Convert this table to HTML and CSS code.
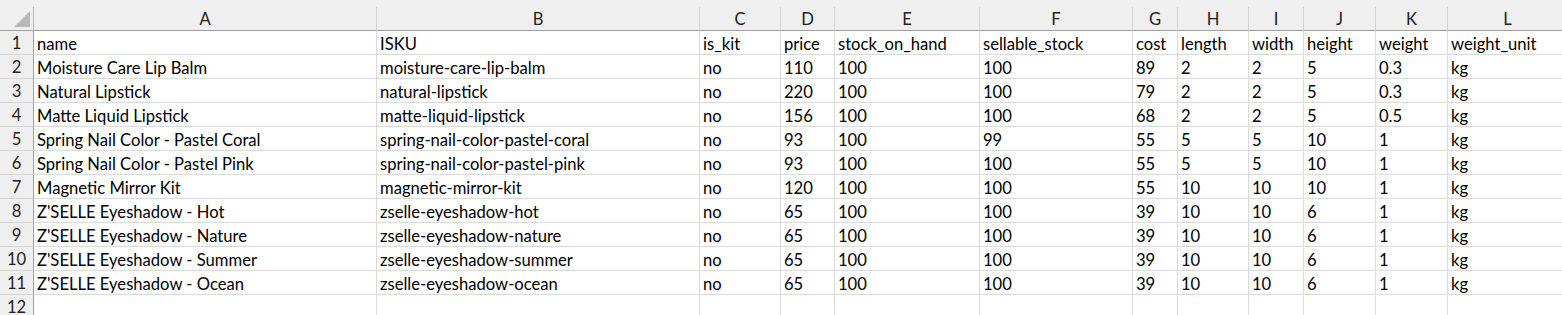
FILE: index.html
```html
<!DOCTYPE html>
<html>
<head>
<meta charset="utf-8">
<link rel="stylesheet" href="styles.css">
</head>
<body>
<div class="sheet">
  <div class="topstrip"></div>
  <div class="grid">
    <div class="corner"><span class="tri"></span></div>
    <div class="ch">A</div><div class="ch">B</div><div class="ch">C</div><div class="ch">D</div><div class="ch">E</div><div class="ch">F</div><div class="ch">G</div><div class="ch">H</div><div class="ch">I</div><div class="ch">J</div><div class="ch">K</div><div class="ch">L</div>

    <div class="rh">1</div><div class="c">name</div><div class="c">ISKU</div><div class="c">is_kit</div><div class="c">price</div><div class="c">stock_on_hand</div><div class="c">sellable_stock</div><div class="c">cost</div><div class="c">length</div><div class="c">width</div><div class="c">height</div><div class="c">weight</div><div class="c">weight_unit</div>

    <div class="rh">2</div><div class="c">Moisture Care Lip Balm</div><div class="c">moisture-care-lip-balm</div><div class="c">no</div><div class="c">110</div><div class="c">100</div><div class="c">100</div><div class="c">89</div><div class="c">2</div><div class="c">2</div><div class="c">5</div><div class="c">0.3</div><div class="c">kg</div>

    <div class="rh">3</div><div class="c">Natural Lipstick</div><div class="c">natural-lipstick</div><div class="c">no</div><div class="c">220</div><div class="c">100</div><div class="c">100</div><div class="c">79</div><div class="c">2</div><div class="c">2</div><div class="c">5</div><div class="c">0.3</div><div class="c">kg</div>

    <div class="rh">4</div><div class="c">Matte Liquid Lipstick</div><div class="c">matte-liquid-lipstick</div><div class="c">no</div><div class="c">156</div><div class="c">100</div><div class="c">100</div><div class="c">68</div><div class="c">2</div><div class="c">2</div><div class="c">5</div><div class="c">0.5</div><div class="c">kg</div>

    <div class="rh">5</div><div class="c">Spring Nail Color - Pastel Coral</div><div class="c">spring-nail-color-pastel-coral</div><div class="c">no</div><div class="c">93</div><div class="c">100</div><div class="c">99</div><div class="c">55</div><div class="c">5</div><div class="c">5</div><div class="c">10</div><div class="c">1</div><div class="c">kg</div>

    <div class="rh">6</div><div class="c">Spring Nail Color - Pastel Pink</div><div class="c">spring-nail-color-pastel-pink</div><div class="c">no</div><div class="c">93</div><div class="c">100</div><div class="c">100</div><div class="c">55</div><div class="c">5</div><div class="c">5</div><div class="c">10</div><div class="c">1</div><div class="c">kg</div>

    <div class="rh">7</div><div class="c">Magnetic Mirror Kit</div><div class="c">magnetic-mirror-kit</div><div class="c">no</div><div class="c">120</div><div class="c">100</div><div class="c">100</div><div class="c">55</div><div class="c">10</div><div class="c">10</div><div class="c">10</div><div class="c">1</div><div class="c">kg</div>

    <div class="rh">8</div><div class="c">Z'SELLE Eyeshadow - Hot</div><div class="c">zselle-eyeshadow-hot</div><div class="c">no</div><div class="c">65</div><div class="c">100</div><div class="c">100</div><div class="c">39</div><div class="c">10</div><div class="c">10</div><div class="c">6</div><div class="c">1</div><div class="c">kg</div>

    <div class="rh">9</div><div class="c">Z'SELLE Eyeshadow - Nature</div><div class="c">zselle-eyeshadow-nature</div><div class="c">no</div><div class="c">65</div><div class="c">100</div><div class="c">100</div><div class="c">39</div><div class="c">10</div><div class="c">10</div><div class="c">6</div><div class="c">1</div><div class="c">kg</div>

    <div class="rh">10</div><div class="c">Z'SELLE Eyeshadow - Summer</div><div class="c">zselle-eyeshadow-summer</div><div class="c">no</div><div class="c">65</div><div class="c">100</div><div class="c">100</div><div class="c">39</div><div class="c">10</div><div class="c">10</div><div class="c">6</div><div class="c">1</div><div class="c">kg</div>

    <div class="rh">11</div><div class="c">Z'SELLE Eyeshadow - Ocean</div><div class="c">zselle-eyeshadow-ocean</div><div class="c">no</div><div class="c">65</div><div class="c">100</div><div class="c">100</div><div class="c">39</div><div class="c">10</div><div class="c">10</div><div class="c">6</div><div class="c">1</div><div class="c">kg</div>

    <div class="rh">12</div><div class="c"></div><div class="c"></div><div class="c"></div><div class="c"></div><div class="c"></div><div class="c"></div><div class="c"></div><div class="c"></div><div class="c"></div><div class="c"></div><div class="c"></div><div class="c"></div>
  </div>
</div>
</body>
</html>
```

FILE: styles.css
```css
* { box-sizing: border-box; }
html, body { margin: 0; padding: 0; background: #ffffff; }
body { width: 1562px; height: 315px; overflow: hidden; }

.sheet {
  font-family: Lato, "Open Sans", "Noto Sans", sans-serif;
  font-size: 16.6px;
  color: #000;
}

.topstrip {
  height: 7px;
  background: #f0f0f0;
}

.grid {
  display: grid;
  grid-template-columns: 34px 343px 323px 81px 54px 145px 153px 45px 71px 55px 72px 72px 120px;
  grid-auto-rows: 24px;
  grid-template-rows: 24px;
}

.corner, .ch {
  background: #efefef;
  border-right: 1px solid #d4d4d4;
  border-bottom: 1px solid #a0a0a0;
}

.corner {
  position: relative;
  border-right: 1px solid #b8b8b8;
}
.tri {
  position: absolute;
  right: 3px;
  bottom: 3px;
  width: 0;
  height: 0;
  border-left: 16px solid transparent;
  border-bottom: 16px solid #b9b9b9;
}

.ch {
  display: flex;
  align-items: center;
  justify-content: center;
  color: #222;
  padding-top: 1px;
}

.rh {
  background: #efefef;
  border-right: 1px solid #a0a0a0;
  border-bottom: 1px solid #d4d4d4;
  display: flex;
  align-items: center;
  justify-content: center;
  color: #222;
  padding-top: 1px;
}

.c {
  border-right: 1px solid #dadada;
  border-bottom: 1px solid #dadada;
  padding: 2px 0 0 3px;
  display: flex;
  align-items: center;
  white-space: nowrap;
  overflow: hidden;
}
```
